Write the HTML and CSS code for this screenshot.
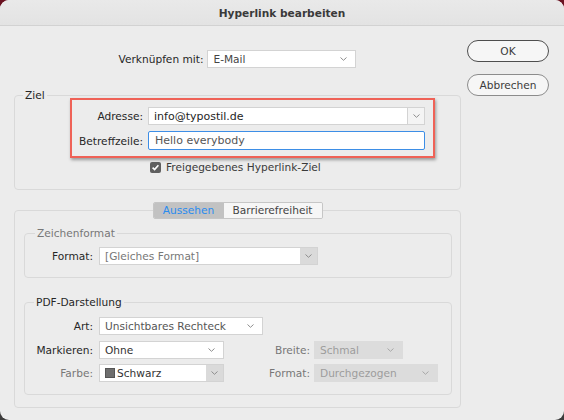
FILE: index.html
```html
<!DOCTYPE html>
<html lang="de">
<head>
<meta charset="utf-8">
<title>Hyperlink bearbeiten</title>
<link rel="stylesheet" href="styles.css">
</head>
<body>
<div class="window">
  <div class="titlebar">Hyperlink bearbeiten</div>
  <div class="content">
    <div class="main">
      <div class="link-row">
        <span class="lbl">Verknüpfen mit:</span>
        <div class="select w-email"><span>E-Mail</span><svg class="chev" viewBox="0 0 7 4"><polyline points="0.5,0.5 3.5,3.3 6.5,0.5"/></svg></div>
      </div>

      <fieldset class="group ziel">
        <legend>Ziel</legend>
        <div class="highlight">
          <span class="lbl">Adresse:</span>
          <div class="combo"><span class="val">info@typostil.de</span><span class="combo-btn"><svg class="chev" viewBox="0 0 7 4"><polyline points="0.5,0.5 3.5,3.3 6.5,0.5"/></svg></span></div>
          <span class="lbl">Betreffzeile:</span>
          <div class="textinput">Hello everybody</div>
        </div>
        <div class="check-row">
          <span class="checkbox"><svg viewBox="0 0 11 11"><polyline points="2.6,5.6 4.6,7.6 8.4,3.2"/></svg></span>
          <span>Freigegebenes Hyperlink-Ziel</span>
        </div>
      </fieldset>

      <fieldset class="group tabbox">
        <legend class="tabs"><span class="tab active">Aussehen</span><span class="tab">Barrierefreiheit</span></legend>

        <fieldset class="group inner zf">
          <legend class="muted">Zeichenformat</legend>
          <div class="row">
            <span class="lbl col1">Format:</span>
            <div class="select w-format grey-btn"><span class="muted">[Gleiches Format]</span><span class="btn-part"><svg class="chev" viewBox="0 0 7 4"><polyline points="0.5,0.5 3.5,3.3 6.5,0.5"/></svg></span></div>
          </div>
        </fieldset>

        <fieldset class="group inner pdf">
          <legend>PDF-Darstellung</legend>
          <div class="pdf-grid">
            <span class="lbl col1">Art:</span>
            <div class="select w-art span"><span class="soft">Unsichtbares Rechteck</span><svg class="chev" viewBox="0 0 7 4"><polyline points="0.5,0.5 3.5,3.3 6.5,0.5"/></svg></div>

            <span class="lbl col1">Markieren:</span>
            <div class="select w-mark"><span>Ohne</span><svg class="chev" viewBox="0 0 7 4"><polyline points="0.5,0.5 3.5,3.3 6.5,0.5"/></svg></div>
            <span class="lbl col3 muted">Breite:</span>
            <div class="select disabled w-breite"><span>Schmal</span><svg class="chev" viewBox="0 0 7 4"><polyline points="0.5,0.5 3.5,3.3 6.5,0.5"/></svg></div>

            <span class="lbl col1 muted">Farbe:</span>
            <div class="select w-mark grey-btn"><span class="swatch"></span><span>Schwarz</span><span class="btn-part"><svg class="chev" viewBox="0 0 7 4"><polyline points="0.5,0.5 3.5,3.3 6.5,0.5"/></svg></span></div>
            <span class="lbl col3 muted">Format:</span>
            <div class="select disabled w-durch"><span>Durchgezogen</span><svg class="chev" viewBox="0 0 7 4"><polyline points="0.5,0.5 3.5,3.3 6.5,0.5"/></svg></div>
          </div>
        </fieldset>
      </fieldset>
    </div>

    <div class="side">
      <button class="btn primary">OK</button>
      <button class="btn">Abbrechen</button>
    </div>
  </div>
</div>
</body>
</html>
```

FILE: styles.css
```css
* { box-sizing: border-box; }

html, body {
  margin: 0;
  height: 420px;
}

body {
  background: linear-gradient(#6a1221 0%, #5a2a30 40%, #3c3c3c 100%);
  font-family: "DejaVu Sans", "Liberation Sans", sans-serif;
  font-size: 10.6px;
  color: #262626;
}

.window {
  width: 564px;
  height: 420px;
  background: #ececec;
  border-radius: 9px;
  overflow: hidden;
}

.titlebar {
  height: 26px;
  line-height: 26px;
  text-align: center;
  font-weight: bold;
  color: #3a3a3a;
  background: linear-gradient(#e9e9e9, #e3e3e3);
  border-bottom: 1px solid #d2d2d2;
}

.content {
  display: flex;
  padding-left: 14px;
}

.main {
  width: 447px;
}

.side {
  display: flex;
  flex-direction: column;
  gap: 12px;
  margin-left: 6px;
  padding-top: 14px;
}

.btn {
  width: 82px;
  height: 22px;
  border: 1px solid #8c8c8c;
  border-radius: 11px;
  background: #f6f6f6;
  font-family: "DejaVu Sans", "Liberation Sans", sans-serif;
  font-size: 10.6px;
  color: #3c3c3c;
  padding: 0;
}

.btn.primary {
  border: 1.6px solid #4e4e4e;
}

.lbl {
  text-align: right;
  white-space: nowrap;
}

.muted { color: #777; }
.soft { color: #555; }

.link-row {
  display: flex;
  justify-content: center;
  align-items: center;
  gap: 4px;
  margin-top: 24px;
  height: 18px;
}

.select {
  height: 18px;
  display: flex;
  align-items: center;
  gap: 3px;
  background: #fff;
  border: 1px solid #d3d3d3;
  padding-left: 5px;
  color: #333;
  white-space: nowrap;
}

.select > span:first-child { flex: 0 0 auto; }

.select .chev {
  margin-left: auto;
  margin-right: 8px;
}

.chev {
  width: 7px;
  height: 4px;
  fill: none;
  stroke: #8d8d8d;
  stroke-width: 1;
  flex: 0 0 auto;
}

.w-email { width: 149px; color: #444; }
.w-format { width: 219px; }
.w-art { width: 164px; }
.w-mark { width: 125px; }
.w-breite { width: 89px; }
.w-durch { width: 124px; }

.grey-btn .btn-part {
  margin-left: auto;
  width: 17px;
  align-self: stretch;
  background: #dadada;
  display: flex;
  align-items: center;
  justify-content: center;
}

.grey-btn .btn-part .chev { margin: 0; }

.select.disabled {
  background: #dcdcdc;
  border-color: #dcdcdc;
  color: #9c9c9c;
}

.select.disabled .chev { stroke: #a8a8a8; }

/* group boxes */
.group {
  margin: 0;
  padding: 0;
  border: 1px solid #d9d9d9;
  border-radius: 4px;
  min-width: 0;
}

.group > legend {
  padding: 0 2px;
  margin-left: 8px;
  line-height: 12px;
}

.ziel {
  margin-top: 21px;
  padding-bottom: 16px;
}

.highlight {
  display: grid;
  grid-template-columns: 71px 277px;
  column-gap: 5px;
  row-gap: 6px;
  align-items: center;
  width: 365px;
  margin: -3px 0 0 55px;
  padding: 7px 8px 6px 0;
  border: 2px solid #ef6257;
  box-shadow: 1px 2px 3px rgba(0, 0, 0, 0.35);
}

.combo {
  display: flex;
  align-items: center;
  height: 18px;
  border: 1px solid #d3d3d3;
  background: #fff;
}

.combo .val {
  padding-left: 5px;
  color: #1e1e1e;
  font-size: 11px;
}

.combo-btn {
  margin-left: auto;
  width: 17px;
  align-self: stretch;
  border-left: 1px solid #d3d3d3;
  background: #f4f4f4;
  display: flex;
  align-items: center;
  justify-content: center;
}

.textinput {
  height: 19px;
  line-height: 17px;
  border: 1px solid #3d8ee6;
  border-radius: 2px;
  background: #fff;
  padding-left: 6px;
  color: #555;
  font-size: 11px;
}

.check-row {
  display: flex;
  align-items: center;
  gap: 5px;
  margin: 3px 0 0 135px;
  color: #3a3a3a;
}

.checkbox {
  width: 11px;
  height: 11px;
  border-radius: 2px;
  background: #5f5f5f;
  display: flex;
}

.checkbox svg {
  width: 11px;
  height: 11px;
  fill: none;
  stroke: #fff;
  stroke-width: 1.6;
}

/* tab box */
.tabbox {
  margin-top: 12px;
  padding-bottom: 12px;
}

.tabbox > legend.tabs {
  margin: 0 auto;
  padding: 0;
  display: flex;
  border: 1px solid #c6c6c6;
  border-radius: 2px;
  line-height: 15px;
  height: 17px;
  overflow: hidden;
}

.tab {
  padding: 0 6px;
  background: #f6f6f6;
  color: #444;
}

.tab.active {
  width: 70px;
  text-align: center;
  background: #c2c2c2;
  color: #2a8cf0;
}

.tab + .tab {
  width: 98px;
  text-align: center;
}

.inner {
  margin: 8px 8px 0 9px;
}

.inner > legend { margin-left: 10px; }

.zf { padding: 8px 0 12px 0; }

.row {
  display: flex;
  align-items: center;
}

.col1 {
  width: 74px;
  padding-right: 6px;
}

.pdf {
  margin-top: 18px;
  padding: 9px 0 12px 0;
}

.pdf > legend { margin-left: 9px; }

.pdf-grid {
  display: grid;
  grid-template-columns: 74px 125px 90px auto;
  row-gap: 5.5px;
  align-items: center;
}

.pdf-grid .span {
  grid-column: 2 / 5;
}

.col3 {
  padding-right: 4px;
}

.swatch {
  width: 10px;
  height: 10px;
  background: #6e6e6e;
  border: 1px solid #555;
  margin-right: -1px;
}
```
